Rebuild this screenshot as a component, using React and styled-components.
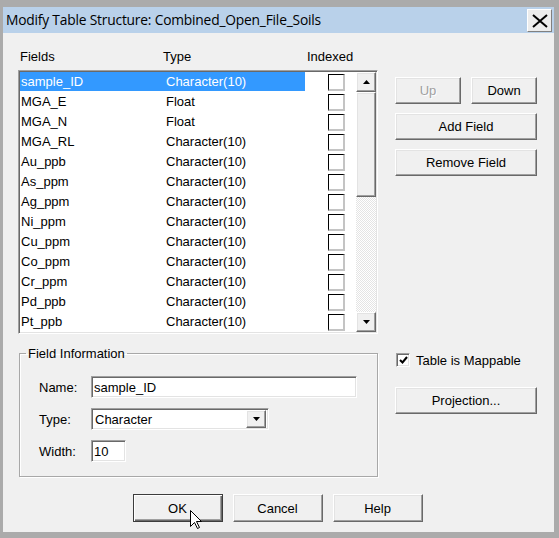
import styled, { createGlobalStyle } from "styled-components";

const GlobalStyle = createGlobalStyle`
  html, body {
    margin: 0;
    padding: 0;
    background: #ababab;
  }
  body {
    font-family: "Liberation Sans", Arial, sans-serif;
    font-size: 13px;
    color: #000;
  }
`;

const Frame = styled.div`
  position: relative;
  width: 559px;
  height: 538px;
  box-sizing: border-box;
  padding: 7px 5px 6px 3px;
  background: #ababab;
`;

const Window = styled.div`
  height: 100%;
  display: flex;
  flex-direction: column;
  background: #f0f0f0;
`;

const TitleBar = styled.div`
  flex: none;
  height: 26px;
  display: flex;
  align-items: flex-start;
  justify-content: space-between;
  padding: 0 2px 0 3px;
  background: #b9d1ea;
`;

const Title = styled.span`
  font-family: "Open Sans", "Noto Sans", sans-serif;
  font-size: 13.8px;
  line-height: 26px;
  letter-spacing: -0.2px;
`;

const CloseButton = styled.div`
  width: 25px;
  height: 23px;
  margin-top: 2px;
  box-sizing: border-box;
  display: flex;
  align-items: center;
  justify-content: center;
  background: #ececec;
  border: 1px solid;
  border-color: #fff #808080 #808080 #fff;
`;

const Body = styled.div`
  flex: 1;
  display: flex;
  flex-direction: column;
  padding: 16px 17px 9px 15px;
`;

const Main = styled.div`
  display: flex;
  gap: 17px;
`;

const LeftCol = styled.div`
  width: 360px;
  display: flex;
  flex-direction: column;
`;

const ColumnHeader = styled.div`
  display: grid;
  grid-template-columns: 143px 144px auto;
  height: 16px;
  line-height: 16px;
  padding-left: 2px;
  margin-bottom: 5px;
`;

const ListBox = styled.div`
  height: 264px;
  box-sizing: border-box;
  display: flex;
  padding: 1px;
  background: #fff;
  border: 1px solid;
  border-color: #a0a0a0 #fff #fff #a0a0a0;
  box-shadow: inset 1px 1px #696969, inset -1px -1px #e3e3e3;
`;

const Rows = styled.div`
  flex: 1;
  overflow: hidden;
`;

const Row = styled.div`
  display: grid;
  grid-template-columns: 145px 140px 1fr;
  height: 20px;
`;

const Cell = styled.div`
  padding-left: 1px;
  line-height: 19px;
  height: 19px;
  white-space: nowrap;
  background: ${(p) => (p.$selected ? "#3399ff" : "transparent")};
  color: ${(p) => (p.$selected ? "#fff" : "#000")};
`;

const CheckCell = styled.div`
  padding: 2px 0 0 23px;
`;

const ListCheck = styled.div`
  width: 17px;
  height: 17px;
  box-sizing: border-box;
  background: #fff;
  border-style: solid;
  border-width: 1px 2px 2px 1px;
  border-color: #000 #c4c4c4 #c4c4c4 #000;
`;

const Scrollbar = styled.div`
  width: 20px;
  display: flex;
  flex-direction: column;
  background: repeating-conic-gradient(#fff 0 25%, #e4e4e4 0 50%) 0 0 / 2px 2px;
`;

const raised = `
  box-sizing: border-box;
  background: #f0f0f0;
  border: 1px solid;
  border-color: #fff #696969 #696969 #fff;
  box-shadow: inset -1px -1px #a0a0a0, inset 1px 1px #e3e3e3;
`;

const ScrollButton = styled.div`
  ${raised}
  height: 20px;
  display: flex;
  align-items: center;
  justify-content: center;
`;

const Thumb = styled.div`
  ${raised}
  height: 105px;
`;

const Track = styled.div`
  flex: 1;
`;

const GroupBox = styled.fieldset`
  margin: 12px 0 0 1px;
  padding: 15px 19px 14px 6px;
  min-width: 0;
  border: 1px solid #a8a8a8;
  box-shadow: 1px 1px #fff, inset 1px 1px #fff;
`;

const Legend = styled.legend`
  padding: 0 2px;
  line-height: 15px;
`;

const FieldGrid = styled.div`
  margin-left: 13px;
  display: grid;
  grid-template-columns: 52px auto;
  grid-auto-rows: 22px;
  row-gap: 10px;
  align-items: center;
`;

const sunken = `
  box-sizing: border-box;
  background: #fff;
  border: 1px solid;
  border-color: #a0a0a0 #fff #fff #a0a0a0;
  box-shadow: inset 1px 1px #696969, inset -1px -1px #e3e3e3;
`;

const TextInput = styled.input`
  ${sunken}
  width: ${(p) => p.$width}px;
  height: 22px;
  padding: 0 2px;
  font: inherit;
  outline: none;
`;

const Select = styled.div`
  ${sunken}
  width: 178px;
  height: 22px;
  display: flex;
  align-items: center;
  justify-content: space-between;
  padding: 2px 2px 2px 3px;
`;

const DropButton = styled(ScrollButton)`
  width: 20px;
  height: 18px;
`;

const RightCol = styled.div`
  width: 142px;
  display: flex;
  flex-direction: column;
  padding-top: 28px;
`;

const ButtonPair = styled.div`
  display: flex;
  gap: 10px;
`;

const Button = styled.div`
  ${raised}
  width: ${(p) => (p.$width ? `${p.$width}px` : "100%")};
  height: ${(p) => p.$height || 27}px;
  margin-top: ${(p) => p.$top || 0}px;
  display: flex;
  align-items: center;
  justify-content: center;
  color: ${(p) => (p.$disabled ? "#a0a0a0" : "#000")};
  text-shadow: ${(p) => (p.$disabled ? "1px 1px #fff" : "none")};
  ${(p) =>
    p.$default &&
    `
    border-color: #3c3c3c;
    box-shadow: inset 1px 1px #fff, inset -1px -1px #696969, inset -2px -2px #a0a0a0;
  `}
`;

const CheckRow = styled.label`
  display: flex;
  align-items: center;
  gap: 6px;
  height: 16px;
  margin-top: 176px;
  padding-left: 1px;
`;

const CheckBox = styled.div`
  ${sunken}
  width: 14px;
  height: 14px;
  display: flex;
  align-items: center;
  justify-content: center;
`;

const ButtonRow = styled.div`
  display: flex;
  justify-content: center;
  gap: 10px;
  margin-top: 17px;
`;

const Cursor = styled.svg`
  position: absolute;
  left: 190px;
  top: 510px;
`;

const fields = [
  ["sample_ID", "Character(10)"],
  ["MGA_E", "Float"],
  ["MGA_N", "Float"],
  ["MGA_RL", "Character(10)"],
  ["Au_ppb", "Character(10)"],
  ["As_ppm", "Character(10)"],
  ["Ag_ppm", "Character(10)"],
  ["Ni_ppm", "Character(10)"],
  ["Cu_ppm", "Character(10)"],
  ["Co_ppm", "Character(10)"],
  ["Cr_ppm", "Character(10)"],
  ["Pd_ppb", "Character(10)"],
  ["Pt_ppb", "Character(10)"],
];

const Arrow = ({ down }) => (
  <svg width="7" height="4" viewBox="0 0 7 4">
    <path d={down ? "M0 0h7L3.5 4z" : "M0 4h7L3.5 0z"} fill="#000" />
  </svg>
);

const App = () => {
  return (
    <Frame>
      <GlobalStyle />
      <Window>
        <TitleBar>
          <Title>Modify Table Structure: Combined_Open_File_Soils</Title>
          <CloseButton>
            <svg width="16" height="14" viewBox="0 0 16 14">
              <path d="M1 1L15 13M15 1L1 13" stroke="#000" strokeWidth="2" />
            </svg>
          </CloseButton>
        </TitleBar>
        <Body>
          <Main>
            <LeftCol>
              <ColumnHeader>
                <span>Fields</span>
                <span>Type</span>
                <span>Indexed</span>
              </ColumnHeader>
              <ListBox>
                <Rows>
                  {fields.map(([name, type], i) => (
                    <Row key={name}>
                      <Cell $selected={i === 0}>{name}</Cell>
                      <Cell $selected={i === 0}>{type}</Cell>
                      <CheckCell>
                        <ListCheck />
                      </CheckCell>
                    </Row>
                  ))}
                </Rows>
                <Scrollbar>
                  <ScrollButton>
                    <Arrow />
                  </ScrollButton>
                  <Thumb />
                  <Track />
                  <ScrollButton>
                    <Arrow down />
                  </ScrollButton>
                </Scrollbar>
              </ListBox>
              <GroupBox>
                <Legend>Field Information</Legend>
                <FieldGrid>
                  <span>Name:</span>
                  <TextInput $width={266} defaultValue="sample_ID" readOnly />
                  <span>Type:</span>
                  <Select>
                    <span>Character</span>
                    <DropButton>
                      <Arrow down />
                    </DropButton>
                  </Select>
                  <span>Width:</span>
                  <TextInput $width={35} defaultValue="10" readOnly />
                </FieldGrid>
              </GroupBox>
            </LeftCol>
            <RightCol>
              <ButtonPair>
                <Button $width={66} $disabled>Up</Button>
                <Button $width={66}>Down</Button>
              </ButtonPair>
              <Button $top={9}>Add Field</Button>
              <Button $top={9}>Remove Field</Button>
              <CheckRow>
                <CheckBox>
                  <svg width="9" height="8" viewBox="0 0 9 8">
                    <path d="M1 4l2.5 2.5L8 1" stroke="#000" strokeWidth="2" fill="none" />
                  </svg>
                </CheckBox>
                <span>Table is Mappable</span>
              </CheckRow>
              <Button $top={19}>Projection...</Button>
            </RightCol>
          </Main>
          <ButtonRow>
            <Button $width={90} $height={28} $default>OK</Button>
            <Button $width={90} $height={28}>Cancel</Button>
            <Button $width={90} $height={28}>Help</Button>
          </ButtonRow>
        </Body>
      </Window>
      <Cursor width="12" height="19" viewBox="0 0 12 19">
        <path
          d="M0.5 0.5V16.5L4.5 12.5L7.5 18.5L9.5 17.5L6.5 11.5H11.5Z"
          fill="#fff"
          stroke="#000"
          strokeLinejoin="round"
        />
      </Cursor>
    </Frame>
  );
};

export default App;
